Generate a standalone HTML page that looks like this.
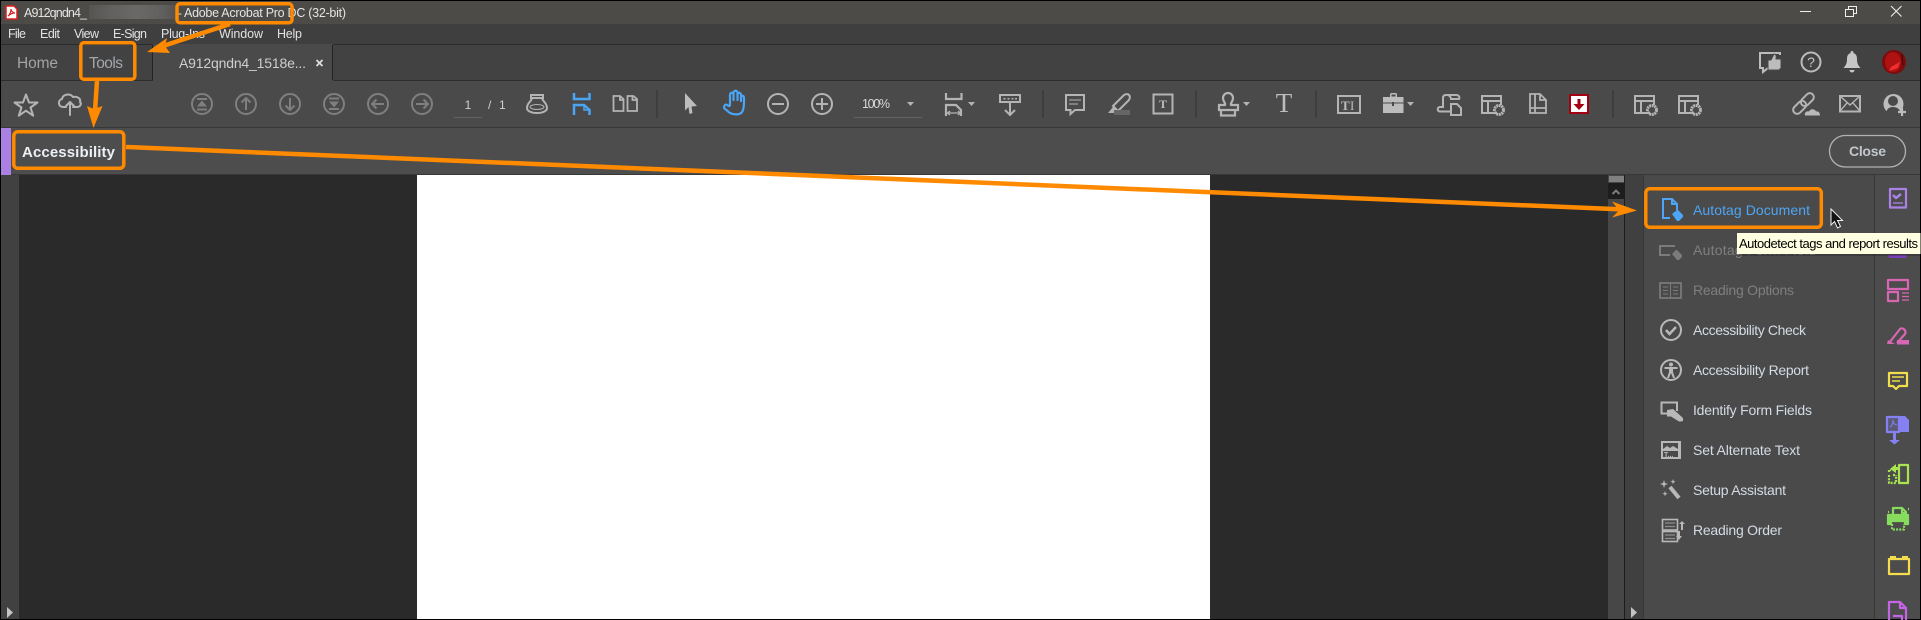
<!DOCTYPE html>
<html><head><meta charset="utf-8"><title>Acrobat</title>
<style>html,body{margin:0;padding:0;background:#000;width:1921px;height:620px;overflow:hidden}svg{display:block}
text{font-family:"Liberation Sans",sans-serif}</style></head><body>
<svg width="1921" height="620" viewBox="0 0 1921 620" xmlns="http://www.w3.org/2000/svg">
<defs><linearGradient id="bl" x1="0" x2="1" y1="0" y2="0"><stop offset="0" stop-color="#555452"/><stop offset=".2" stop-color="#605f5d"/><stop offset=".55" stop-color="#6a6967"/><stop offset=".85" stop-color="#615f5d"/><stop offset="1" stop-color="#52514f"/></linearGradient></defs>
<rect width="1921" height="620" fill="#000"/>
<rect x="1" y="1" width="1919" height="23" fill="#4c4b48"/>
<rect x="1" y="24" width="1919" height="20" fill="#3f3f3f"/>
<rect x="1" y="44" width="1919" height="1" fill="#2b2b2b"/>
<rect x="1" y="45" width="1919" height="35" fill="#424242"/>
<rect x="1" y="80" width="1919" height="1" fill="#2d2d2d"/>
<rect x="1" y="81" width="1919" height="46" fill="#4a4a4a"/>
<rect x="1" y="127" width="1919" height="1" fill="#383838"/>
<rect x="1" y="128" width="1919" height="46" fill="#4d4d4d"/>
<rect x="1" y="174" width="1919" height="1" fill="#383838"/>
<rect x="1" y="175" width="1919" height="444" fill="#2a2a2a"/>
<!-- tab -->
<rect x="153" y="44" width="180" height="37" fill="#4a4a4a"/>
<path d="M152.500 45V80M332.500 45V80" stroke="#232323" fill="none"/>
<!-- left strip -->
<rect x="1" y="128" width="10" height="47" fill="#aa80e2"/>
<rect x="1" y="175" width="18" height="444" fill="#414141"/>
<path d="M7 607l6 5.500-6 5.500z" fill="#c4c4c4"/>
<!-- page -->
<rect x="417" y="175" width="793" height="444" fill="#fff"/>
<!-- scrollbar + panes -->
<rect x="1608" y="175" width="16" height="444" fill="#474747"/>
<rect x="1624" y="175" width="1" height="444" fill="#1c1c1c"/>
<rect x="1609" y="176" width="15" height="6" fill="#808080"/>
<rect x="1608" y="183" width="16" height="16" fill="#1d1d1d"/>
<path d="M1612.500 194l3.500-3.500 3.500 3.500" stroke="#7c7c7c" stroke-width="2" fill="none"/>
<rect x="1625" y="175" width="18" height="444" fill="#404040"/>
<rect x="1643" y="175" width="1" height="444" fill="#383838"/>
<rect x="1644" y="175" width="230" height="444" fill="#4a4a4a"/>
<rect x="1874" y="175" width="1" height="444" fill="#383838"/>
<rect x="1875" y="175" width="45" height="444" fill="#4c4c4c"/>
<path d="M1631 607l6 5.500-6 5.500z" fill="#c4c4c4"/>

<!-- title bar -->
<path d="M6 6h8l3 3v10H6z" fill="#fff"/><path d="M6 6h8l3 3v10H6z" fill="none" stroke="#d8201f" stroke-width="1.500"/><path d="M8 16c2-1 3-5 3-7 0 2 2 4 4 4-2 0-5 1-7 3z" fill="none" stroke="#d8201f" stroke-width="1.200"/>
<text x="24" y="17" font-size="12.500" fill="#e4e4e4" textLength="63" lengthAdjust="spacing">A912qndn4_</text>
<rect x="89" y="5" width="88" height="14" fill="url(#bl)"/>
<text x="178" y="17" font-size="12" fill="#e4e4e4">-</text>
<text x="184" y="17" font-size="12.500" fill="#e4e4e4" textLength="162" lengthAdjust="spacing">Adobe Acrobat Pro DC (32-bit)</text>
<g font-size="12.500" fill="#e2e2e2">
<text x="8" y="38" textLength="18" lengthAdjust="spacing">File</text>
<text x="40" y="38" textLength="20" lengthAdjust="spacing">Edit</text>
<text x="74" y="38" textLength="25" lengthAdjust="spacing">View</text>
<text x="113" y="38" textLength="34" lengthAdjust="spacing">E-Sign</text>
<text x="161" y="38" textLength="44" lengthAdjust="spacing">Plug-Ins</text>
<text x="219" y="38" textLength="44" lengthAdjust="spacing">Window</text>
<text x="277" y="38" textLength="25" lengthAdjust="spacing">Help</text>
</g>
<!-- window controls -->
<path d="M1800 11.500h11" stroke="#eee" stroke-width="1"/>
<path d="M1845.500 9.500h8v7h-8zM1848.500 9.500v-3h8v7h-3" fill="none" stroke="#eee" stroke-width="1"/>
<path d="M1891 6l10.500 10.500M1901.500 6L1891 16.500" stroke="#eee" stroke-width="1.100"/>
<!-- tabs -->
<text x="17" y="68" font-size="15.500" fill="#a3a3a3" textLength="41" lengthAdjust="spacing">Home</text>
<text x="89" y="68" font-size="15.500" fill="#a3a7ab" textLength="34" lengthAdjust="spacing">Tools</text>
<text x="179" y="68" font-size="14" fill="#cfcfcf" textLength="127" lengthAdjust="spacing">A912qndn4_1518e...</text>
<path d="M316.500 60l6 6M322.500 60l-6 6" stroke="#ddd" stroke-width="1.800"/>
<!-- tab right icons -->
<g stroke="#bcbcbc" fill="none" stroke-width="2">
<path d="M1780 55v-2h-20v15h3v4l5-4h2"/><path d="M1768 60h3l3-6c2 0 2.500 2 2 5h5v9l-2 2h-11z" fill="#bcbcbc" stroke="#4a4a4a" stroke-width="1"/>
<circle cx="1811" cy="62" r="9.500"/>
<path d="M1852 53c-4 0-5 3-5 6 0 5-1.500 6.500-3.500 9h17c-2-2.500-3.500-4-3.500-9 0-3-1-6-5-6z" fill="#c6c6c6" stroke="none"/><path d="M1849.500 70a2.500 2.500 0 005 0z" fill="#c6c6c6" stroke="none"/><circle cx="1852" cy="52.500" r="1.500" fill="#c6c6c6" stroke="none"/>
</g>
<text x="1811" y="67" font-size="14" fill="#c4c4c4" text-anchor="middle">?</text>
<circle cx="1894" cy="62" r="12" fill="#7d0c0c"/><ellipse cx="1893" cy="62" rx="8" ry="10" fill="#b01212"/><path d="M1889 71l9-3 2-7-2 2-7 4z" fill="#f03030"/><path d="M1902 54l.8 11" stroke="#3a0606" stroke-width="1"/>

<!-- toolbar -->
<g stroke="#b4b4b4" fill="none" stroke-width="2" stroke-linejoin="round" stroke-linecap="round">
<path d="M26 94.500l3 8h8.500l-7 5 2.700 8.200-7.200-5-7.200 5 2.700-8.200-7-5h8.500z"/>
<path d="M66 107h-3c-5 0-5.500-7-1-8 1-5 8-6 11-2 5-1 8 2 7 5 2 2 0 5-3 5h-4M70 115v-13m-4 4l4-4 4 4"/>
</g>
<g stroke="#7f7f7f" fill="none" stroke-width="2">
<circle cx="202" cy="104" r="10"/><circle cx="246" cy="104" r="10"/><circle cx="290" cy="104" r="10"/><circle cx="334" cy="104" r="10"/><circle cx="378" cy="104" r="10"/><circle cx="422" cy="104" r="10"/>
<path d="M197 99h10M197 109.500h10"/><path d="M202 100.500l5 6h-10z" fill="#7f7f7f" stroke="none"/>
<path d="M246 110v-12m-4.500 4.500l4.500-4.500 4.500 4.500"/>
<path d="M290 98v12m-4.500-4.500l4.500 4.500 4.500-4.500"/>
<path d="M329 98.500h10M329 109h10"/><path d="M334 107.500l5-6h-10z" fill="#7f7f7f" stroke="none"/>
<path d="M384 104h-12m4.500-4.500l-4.500 4.500 4.500 4.500"/>
<path d="M416 104h12m-4.500-4.500l4.500 4.500-4.500 4.500"/>
</g>
<text x="468" y="109" font-size="12" fill="#d0d0d0" text-anchor="middle">1</text>
<rect x="454" y="117" width="28" height="1" fill="#636363"/>
<text x="488" y="109" font-size="12" fill="#d0d0d0">/</text>
<text x="499" y="109" font-size="12" fill="#d0d0d0">1</text>
<g stroke="#b4b4b4" fill="none" stroke-width="2">
<path d="M531 95h12v3h-12zM532 98c-1 4-5 5-5 10 0 3 4 5 10 5s10-2 10-5c0-5-4-6-5-10"/><ellipse cx="537" cy="107" rx="7" ry="2.500" stroke-width="1"/>
<path d="M620 96h-6.500v15h10v-12l-3.500-3zM620 96v4h3.500M632 96h-4.500v15h9.500v-12l-3.500-3zM632.500 96v4h4" stroke-width="1.800"/>
</g>
<g stroke="#4aa5f5" fill="none" stroke-width="2.500">
<path d="M574 93v6h15.500v-6M574 115v-10h10l5.500 5v5"/>
<path d="M584 105v5h5.500" stroke-width="1.500"/>
</g>
<path d="M657 90v28M1043 90v28M1196 90v28M1316 90v28M1613 90v28" stroke="#333" stroke-width="1"/>
<path d="M685 93l12 13-5.500.5 1 6.500-3 1-1-7-3.500 3.500z" fill="#bdbdbd"/>
<path d="M725 109c2 1 3 3 5 4 4 2 10 2 12-1 2-3 2-8 2-14 0-3-3-3-3 0v3-6c0-3-3.500-3-3.500 0v5-7c0-3-4-3-4 0v7-5c0-3-3.500-3-3.500 0v10c-1 3-3-2-5 0-1 1-1.500 3 0 4z" fill="none" stroke="#4aa5f5" stroke-width="2.200" stroke-linejoin="round"/>
<g stroke="#b4b4b4" fill="none" stroke-width="2">
<circle cx="778" cy="104" r="10"/><path d="M772 104h12"/>
<circle cx="822" cy="104" r="10"/><path d="M816 104h12M822 98v12"/>
</g>
<text x="862" y="108" font-size="12.500" fill="#d8d8d8" textLength="28" lengthAdjust="spacing">100%</text>
<path d="M907 102h7l-3.500 4z" fill="#b4b4b4"/>
<rect x="854" y="117" width="68" height="1" fill="#636363"/>
<g stroke="#b4b4b4" fill="none" stroke-width="2">
<path d="M946 93v6h15.500v-6M946 116v-11h10l5 5v6" stroke-width="2.200"/>
<path d="M948 113h12M950 111l-2.500 2 2.500 2M958 111l2.500 2-2.500 2" stroke-width="1.300"/>
</g>
<path d="M968 102h7l-3.500 4z" fill="#b4b4b4"/>
<g stroke="#b4b4b4" fill="none" stroke-width="2">
<rect x="1000" y="95" width="20" height="7"/><path d="M1010 102v13m-5-5l5 5 5-5"/>
</g>
<path d="M1003.500 98h2v1.500h-2zM1007.500 98h2v1.500h-2zM1011.500 98h2v1.500h-2zM1015 98h2v1.500h-2z" fill="#b4b4b4"/>
<g stroke="#b4b4b4" fill="none" stroke-width="2">
<path d="M1066 95h18v15h-9l-4.500 4v-4h-4.500z"/>
<path d="M1069 100h12M1069 104h9" stroke-width="1"/>
<path d="M1113 106l11-11c2-1 4-1 5 0 1 1 1 3 0 5l-11 11z"/>
<rect x="1153.500" y="94.500" width="19" height="19"/>
</g>
<path d="M1113 107l5 5-2 1h-8z" fill="#b4b4b4"/><rect x="1114" y="110" width="16" height="5" fill="#666"/>
<text x="1163" y="108" font-size="12" font-weight="bold" style="font-family:'Liberation Serif',serif" fill="#bcbcbc" text-anchor="middle">T</text>
<g stroke="#b4b4b4" fill="none" stroke-width="2.200">
<path d="M1219 110v-5h6c1-2-2-3-2-7a5 5 0 0110 0c0 4-3 5-2 7h7v5zM1221 110v5.500h14V110"/>
</g>
<path d="M1243 102h7l-3.500 4z" fill="#b4b4b4"/>
<text x="1284" y="112" font-size="27" style="font-family:'Liberation Serif',serif" fill="#bcbcbc" text-anchor="middle">T</text>
<rect x="1338" y="96" width="22" height="17" fill="none" stroke="#b4b4b4" stroke-width="2"/>
<text x="1341" y="110" font-size="13" font-weight="bold" style="font-family:'Liberation Serif',serif" fill="#bcbcbc">T</text>
<text x="1350" y="110" font-size="13" style="font-family:'Liberation Serif',serif" fill="#bcbcbc">I</text>
<path d="M1383 97h7v-2.500c0-1 1-1.500 1.500-1.500h4c1 0 1.500 1 1.500 1.500V97h6.500v16h-20.500z" fill="#bcbcbc"/><path d="M1392 96v-1h3v1zM1383 103h20.500" stroke="#4a4a4a" stroke-width="1"/><rect x="1392" y="102" width="2" height="4" fill="#4a4a4a"/>
<path d="M1407 102h7l-3.500 4z" fill="#b4b4b4"/>
<g stroke="#b4b4b4" fill="none" stroke-width="2">
<path d="M1443 107V98c0-2 1-3 3-3h10c3 0 4 2 3 4h-8c0-2-1-3-3-4"/><path d="M1450 111.500h-10c-3 0-3-4.500 0-4.500h4"/>
<path d="M1451 104h6l4 4v7h-10z"/>
</g>
<g stroke="#b4b4b4" fill="none" stroke-width="2">
<path d="M1501 105v-9h-19v17h15M1482 101h19M1488 101v12"/>
</g>
<circle cx="1499" cy="110" r="4.500" fill="none" stroke="#b4b4b4" stroke-width="3" stroke-dasharray="2 .6"/>
<g stroke="#b4b4b4" fill="none" stroke-width="2">
<path d="M1530 94h10l6 6v13h-16zM1540 94v6h6M1530 108h16M1535 94v19" stroke-width="1.800"/>
</g>
<rect x="1570" y="95" width="18" height="18" fill="#fff" stroke="#a5000f" stroke-width="2"/>
<path d="M1577.500 99h3v5h4l-5.500 6-5.500-6h4z" fill="#a5000f"/>
<g stroke="#b4b4b4" fill="none" stroke-width="2">
<path d="M1654 105v-9h-19v17h15M1635 101h19M1641 101v12"/>
<path d="M1698 105v-9h-19v17h15M1679 101h19M1685 101v12"/>
</g>
<circle cx="1652" cy="110" r="4.500" fill="none" stroke="#b4b4b4" stroke-width="3" stroke-dasharray="2 .6"/>
<circle cx="1696" cy="110" r="4.500" fill="none" stroke="#b4b4b4" stroke-width="3" stroke-dasharray="2 .6"/>
<g stroke="#b4b4b4" fill="none" stroke-width="2">
<rect x="-8" y="-4" width="15" height="8" rx="4" transform="translate(1800,107) rotate(-45)"/>
<rect x="-7" y="-4" width="15" height="8" rx="4" transform="translate(1807,100) rotate(-45)"/>
</g>
<path d="M1805 115.500c-1-3 2-5 4-4 1-3 6-3 7 0 2-1 4 1 4 4z" fill="#b9b9b9"/>
<rect x="1840" y="96" width="20" height="15.500" fill="none" stroke="#b4b4b4" stroke-width="2"/><path d="M1840 96l10 9 10-9M1840 111l7-8M1860 111l-7-8" stroke="#b4b4b4" stroke-width="1.400" fill="none"/>
<circle cx="1893.500" cy="104" r="10" fill="#bcbcbc"/><circle cx="1893" cy="101" r="5" fill="#4a4a4a"/><path d="M1886 113c1-5 4-6 7-6 4 0 6 2 7 4l-2 3c-3 1-9 1-12-1z" fill="#4a4a4a"/><path d="M1898 112h8M1902 108v8" stroke="#bcbcbc" stroke-width="2.200"/>

<!-- tools bar -->
<text x="22" y="157" font-size="15" font-weight="bold" fill="#ecf0f4" textLength="93" lengthAdjust="spacing">Accessibility</text>
<rect x="1829.500" y="135.500" width="76" height="31.500" rx="15.750" fill="none" stroke="#b2b2b2" stroke-width="1.300"/>
<text x="1849" y="156" font-size="14" font-weight="bold" fill="#c2c6cb" textLength="37" lengthAdjust="spacing">Close</text>

<!-- sidebar -->
<g font-size="14" fill="#d3dbe4">
<text x="1693" y="215" fill="#4fa5f5" textLength="117" lengthAdjust="spacing">Autotag Document</text>
<text x="1693" y="255" fill="#7f7f7f" textLength="123" lengthAdjust="spacing">Autotag Form Field</text>
<text x="1693" y="295" fill="#7f7f7f" textLength="101" lengthAdjust="spacing">Reading Options</text>
<text x="1693" y="335" textLength="113" lengthAdjust="spacing">Accessibility Check</text>
<text x="1693" y="375" textLength="116" lengthAdjust="spacing">Accessibility Report</text>
<text x="1693" y="415" textLength="119" lengthAdjust="spacing">Identify Form Fields</text>
<text x="1693" y="455" textLength="107" lengthAdjust="spacing">Set Alternate Text</text>
<text x="1693" y="495" textLength="93" lengthAdjust="spacing">Setup Assistant</text>
<text x="1693" y="535" textLength="89" lengthAdjust="spacing">Reading Order</text>
</g>
<!-- sidebar icons -->
<path d="M1670 218h-7v-19h9l5 5v6M1672 199v5h5" fill="none" stroke="#4fa5f5" stroke-width="2"/>
<path d="M1672 214l5-4h1l5 5v2l-4 4h-2z" fill="#4fa5f5"/>
<path d="M1675 246h-15v9h10" fill="none" stroke="#7b7b7b" stroke-width="2"/>
<path d="M1672 254l4-4h1l5 5v2l-3 3h-2z" fill="#7b7b7b"/>
<g stroke="#7b7b7b" fill="none" stroke-width="1.700"><rect x="1660" y="283" width="21" height="15"/><path d="M1670.500 283v15M1663 287h5M1663 290.500h5M1663 294h5M1673 287h5M1673 290.500h5M1673 294h5" stroke-width="1"/></g>
<g stroke="#b8b8b8" fill="none" stroke-width="2"><circle cx="1671" cy="330" r="10"/><path d="M1666 330l3.500 4 6.500-7" stroke-width="2.500"/>
<circle cx="1671" cy="370" r="10"/></g>
<circle cx="1671" cy="364.500" r="2" fill="#b8b8b8"/><path d="M1664.500 367h13v2h-4.500v3l2 6h-2l-2-5-2 5h-2l2-6v-3h-4.500z" fill="#b8b8b8"/>
<path d="M1677 411v-8.500h-15.500v11h6" fill="none" stroke="#b8b8b8" stroke-width="2"/>
<path d="M1667 410l6-1 10 9v3l-2 .5h-2l-8-5h-4z" fill="#b8b8b8"/>
<rect x="1661" y="441" width="20" height="18" fill="#b8b8b8"/><path d="M1663 449l4-3 3 2 3-2 5 3v-6h-15z" fill="#4a4a4a"/><path d="M1663 451h15v6h-15z" fill="#4a4a4a"/><text x="1664" y="457" font-size="7" font-weight="bold" fill="#b8b8b8">T...</text>
<path d="M1670 487l9 11" stroke="#b8b8b8" stroke-width="4"/>
<path d="M1664 480l1 3 3 1-3 1-1 3-1-3-3-1 3-1zM1673 479l.7 2 2 .7-2 .7-.7 2-.7-2-2-.7 2-.7zM1665 491l.7 2 2 .7-2 .7-.7 2-.7-2-2-.7 2-.7z" fill="#b8b8b8"/>
<g stroke="#b8b8b8" fill="none" stroke-width="1.600"><rect x="1662.500" y="519.500" width="15" height="10.500"/><rect x="1662.500" y="531.500" width="15" height="10"/><path d="M1665 523h10M1665 526.500h10M1665 535h10M1665 538.500h10" stroke-width="1.300" stroke="#8e8e8e"/></g>
<path d="M1679 524l3-3 3 3h-2v6h-2v-6zM1676 536h2v-5h2v5h2l-3 4z" fill="#b8b8b8"/>

<!-- right strip icons -->
<g fill="none" stroke-width="2.200" stroke-linejoin="round">
<g stroke="#aa82e6"><rect x="1890" y="189" width="16" height="18.500"/><path d="M1893 195l3 3 5-4" stroke-width="2.500"/><path d="M1893 203h10" stroke-width="1.300"/></g>
<path d="M1890 255v1.500h15V255" stroke="#7b3fb5" stroke-width="3"/>
<g stroke="#d866b4"><rect x="1888" y="280" width="20" height="9"/><rect x="1888" y="292" width="10" height="9"/><path d="M1902 293h7M1902 296.500h7M1902 300h7" stroke-width="1.200"/></g>
<path d="M1889 343l11-14c2-2 7 1 5 5l-8 9" stroke="#d866b4"/><path d="M1888 340l7 4h-8zM1897 340h12v4.500h-12z" fill="#d866b4" stroke="none"/>
<path d="M1889 373h18v13h-8l-3 3-3-3h-4z" stroke="#f2dd4c"/><path d="M1892 377h12M1892 381h8" stroke="#f2dd4c" stroke-width="1.500"/>
<path d="M1887 417h12v15h-12z" stroke="#8581f2" fill="#8581f2" fill-opacity=".25"/><path d="M1898 416h7l4 4v12h-11z" fill="#8581f2" stroke="none"/><path d="M1893 433v7h-4l5.500 4.500 5.500-4.500h-4v-7z" fill="#8581f2" stroke="none"/><path d="M1890 427c2-1 3-4 3-7 0 3 2 5 4 5" stroke="#8581f2" stroke-width="1"/>
<rect x="1899" y="465" width="9" height="18" stroke="#a9e34f"/><path d="M1889 472v-2h2M1889 475v8h7v-8M1893 475h2" stroke="#a9e34f" stroke-dasharray="2 1.200"/><path d="M1890 469l6-5v3h2v3h-2v3z" fill="#a9e34f" stroke="none"/>
<path d="M1893 515v-7h9l4 4v3M1902 508v5h4" stroke="#87dc5e"/><path d="M1888 512h1M1908 509h1" stroke="#87dc5e"/><path d="M1888 515h20v9h-3v-3h-14v3h-3z" fill="#87dc5e" stroke="#87dc5e"/><path d="M1892 524v5.500h12V524" stroke="#87dc5e" stroke-dasharray="2 1.200"/>
<path d="M1889 559h20v15h-20z" stroke="#f5dc4e"/><path d="M1890 556h6v3h-6zM1902 556h6v3h-6z" fill="#f5dc4e" stroke="none"/>
<path d="M1889 620v-18h11l6 6v12M1900 602v6h6M1893 616h9v4" stroke="#c465e6"/>
</g>

<!-- tooltip -->
<rect x="1739" y="236" width="182" height="20" fill="#000" opacity=".2"/>
<rect x="1737" y="233" width="183.500" height="21" fill="#ffffe1"/>
<text x="1739" y="248" font-size="13" fill="#000" textLength="179" lengthAdjust="spacing">Autodetect tags and report results</text>
<!-- cursor -->
<path d="M1831 209v16l3.500-3.500 3 6.500 3-1.500-3-6h5z" fill="#111" stroke="#eee" stroke-width="1"/>

<!-- orange annotations -->
<g fill="none" stroke="#ff8a00" stroke-width="3.500" stroke-linejoin="round">
<rect x="177" y="3.800" width="115" height="19" rx="3"/>
<rect x="80.800" y="42.800" width="54" height="36.500" rx="3"/>
<rect x="13.800" y="131.800" width="110" height="36.500" rx="4"/>
<rect x="1645.800" y="188.800" width="175.500" height="38.500" rx="4"/>
</g>
<g fill="none" stroke="#ff8a00">
<path d="M230 24l-70 23" stroke-width="4.500"/>
<path d="M97 81l-2 30" stroke-width="4.500"/>
<path d="M126 147L1625 209.500" stroke-width="4.500"/>
</g>
<g fill="#ff8a00">
<path d="M147 52l20-14-2 8 5 7z"/>
<path d="M93.500 128l-6.500-22 7 3 8.500-3z"/>
<path d="M1637 210.500l-25-9 7 9-7 7z"/>
</g>
</svg>
</body></html>
